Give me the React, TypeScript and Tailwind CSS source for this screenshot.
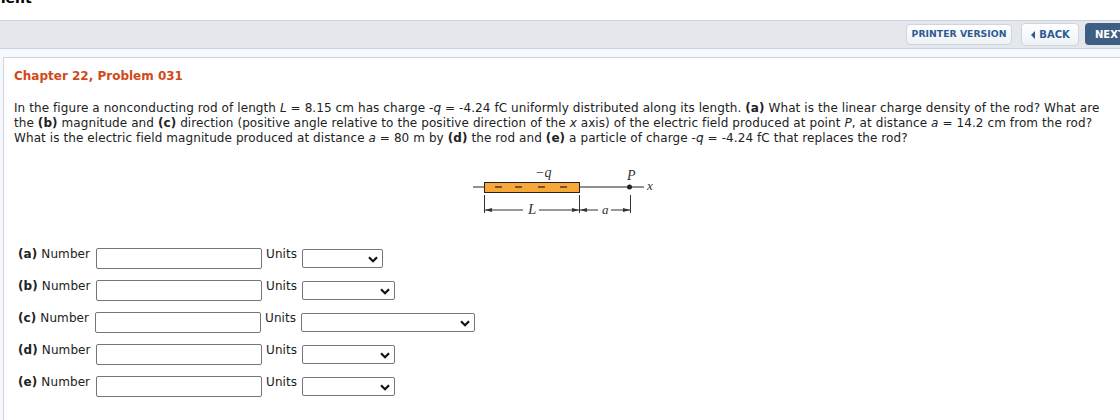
const font = "font-['DejaVu_Sans','Liberation_Sans',sans-serif]";

const Chevron = () => (
  <svg width="10" height="7" viewBox="0 0 10 7" className="absolute right-[4px] top-[6px]">
    <path d="M1 1.2 L5 5.2 L9 1.2" fill="none" stroke="#111" strokeWidth="2.2" />
  </svg>
);

const Row = ({ tag, labelWidth, selectWidth }: { tag: string; labelWidth: string; selectWidth: string }) => (
  <div className="flex h-[32px] items-start text-[12px] leading-[15px] tracking-[0.1px] text-[#222]">
    <div className={`pt-[2px] ${labelWidth}`}>
      <b>({tag})</b> Number
    </div>
    <div className="mt-[3px] h-[21px] w-[166px] rounded-[2px] border border-[#767676] bg-white" />
    <div className="ml-[4px] w-[36px] pt-[2px]">Units</div>
    <div className={`relative mt-[4px] h-[19px] rounded-[2px] border border-[#767676] bg-white ${selectWidth}`}>
      <Chevron />
    </div>
  </div>
);

const Figure = () => (
  <svg width="200" height="60" viewBox="0 0 200 60" className="block">
    <line x1="13" y1="27" x2="184" y2="27" stroke="#222" strokeWidth="1" />
    <rect x="24.5" y="22.5" width="95" height="10" fill="#f7a836" stroke="#222" strokeWidth="1" />
    <g stroke="#222" strokeWidth="1.2">
      <line x1="35" y1="27" x2="42" y2="27" />
      <line x1="55" y1="27" x2="62" y2="27" />
      <line x1="78" y1="27" x2="85" y2="27" />
      <line x1="100" y1="27" x2="107" y2="27" />
    </g>
    <circle cx="169.5" cy="27" r="2.5" fill="#222" />
    <g stroke="#333" strokeWidth="1">
      <line x1="24.5" y1="35" x2="24.5" y2="53" />
      <line x1="119.5" y1="35" x2="119.5" y2="53" />
      <line x1="170.5" y1="35" x2="170.5" y2="53" />
      <line x1="25" y1="50" x2="63" y2="50" />
      <line x1="79" y1="50" x2="119" y2="50" />
      <line x1="120" y1="50" x2="138" y2="50" />
      <line x1="151" y1="50" x2="170" y2="50" />
    </g>
    <g fill="#333">
      <path d="M25 50 L32 48 L32 52 Z" />
      <path d="M119 50 L112 48 L112 52 Z" />
      <path d="M120 50 L127 48 L127 52 Z" />
      <path d="M170 50 L163 48 L163 52 Z" />
    </g>
    <g fill="#333" fontFamily="'Liberation Serif', serif" fontStyle="italic">
      <text x="75" y="17" fontSize="14">−q</text>
      <text x="167" y="20" fontSize="14">P</text>
      <text x="187" y="30" fontSize="13">x</text>
      <text x="68" y="54" fontSize="15">L</text>
      <text x="142" y="54" fontSize="13">a</text>
    </g>
  </svg>
);

export default function App() {
  return (
    <div className={`${font} h-[420px] w-[1120px] overflow-hidden bg-white`}>
      <div className="relative h-[20px] overflow-hidden">
        <div className="absolute left-[-9px] top-[-10px] text-[14px] leading-[17px] font-bold text-black">ment</div>
      </div>
      <div className="flex h-[29px] items-start border-y border-[#c9d2de] bg-[#e4e8ec] pl-[906px] pt-[2px]">
        <div className="mt-[1px] flex h-[21px] w-[106px] shrink-0 items-center justify-center rounded-[4px] border border-[#cdd5df] bg-gradient-to-b from-white to-[#eef1f5] pb-[1px] text-[9.3px] font-bold text-[#2d5a93]">
          PRINTER VERSION
        </div>
        <div className="ml-[9px] flex h-[23px] w-[58px] shrink-0 items-center justify-center gap-[4px] rounded-[4px] border border-[#cdd5df] bg-gradient-to-b from-white to-[#eef1f5] pl-[1px] text-[10px] font-bold text-[#2d5a93]">
          <span className="h-0 w-0 border-y-[4px] border-r-[4px] border-y-transparent border-r-[#2d5a93]" />
          BACK
        </div>
        <div className="ml-[6px] flex h-[22px] w-[48px] shrink-0 items-center rounded-[4px] bg-[#3e5f82] pl-[10px] text-[10px] font-bold text-white">
          NEXT
        </div>
      </div>
      <div className="bg-[#f5f8fc] pl-[3px] pt-[8px]">
        <div className="h-[363px] border-l border-t border-[#d0d5dd] bg-white pl-[10px] pt-[10px]">
          <h1 className="text-[12px] leading-[16px] font-bold text-[#d1491a]">Chapter 22, Problem 031</h1>
          <p className="mt-[17px] w-[1095px] text-[12px] leading-[15px] tracking-[0.085px] text-[#222]">
            In the figure a nonconducting rod of length <i>L</i> = 8.15 cm has charge -<i>q</i> = -4.24 fC uniformly
            distributed along its length. <b>(a)</b> What is the linear charge density of the rod? What are the{" "}
            <b>(b)</b> magnitude and <b>(c)</b> direction (positive angle relative to the positive direction of the{" "}
            <i>x</i> axis) of the electric field produced at point <i>P</i>, at distance <i>a</i> = 14.2 cm from the
            rod? What is the electric field magnitude produced at distance <i>a</i> = 80 m by <b>(d)</b> the rod and{" "}
            <b>(e)</b> a particle of charge -<i>q</i> = -4.24 fC that replaces the rod?
          </p>
          <div className="ml-[446px] mt-[14px]">
            <Figure />
          </div>
          <div className="mt-[25px] pl-[4px]">
            <Row tag="a" labelWidth="w-[78px]" selectWidth="w-[81px]" />
            <Row tag="b" labelWidth="w-[78px]" selectWidth="w-[93px]" />
            <Row tag="c" labelWidth="w-[77px]" selectWidth="w-[174px]" />
            <Row tag="d" labelWidth="w-[78px]" selectWidth="w-[93px]" />
            <Row tag="e" labelWidth="w-[78px]" selectWidth="w-[93px]" />
          </div>
        </div>
      </div>
    </div>
  );
}
